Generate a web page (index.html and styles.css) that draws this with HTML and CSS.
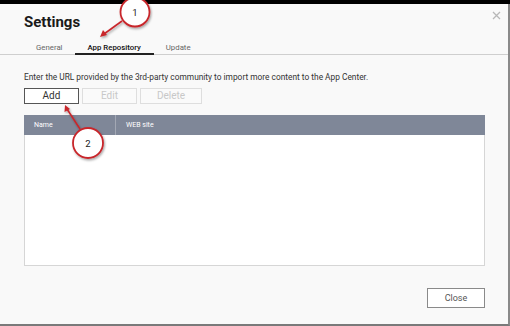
FILE: index.html
```html
<!DOCTYPE html>
<html>
<head>
<meta charset="utf-8">
<link rel="stylesheet" href="styles.css">
</head>
<body>
<div class="page">
  <div class="topbar"></div>
  <div class="dialog">
    <div class="close-x">
      <svg width="9" height="9" viewBox="0 0 9 9"><path d="M1 1L8 8M8 1L1 8" stroke="#b8b8b8" stroke-width="1.3" fill="none"/></svg>
    </div>
    <h1 class="title">Settings</h1>
    <div class="tabs">
      <div class="tab">General</div>
      <div class="tab active">App Repository</div>
      <div class="tab">Update</div>
    </div>
    <div class="content">
      <p class="desc">Enter the URL provided by the 3rd-party community to import more content to the App Center.</p>
      <div class="actions">
        <button class="btn btn-add">Add</button>
        <button class="btn btn-edit disabled">Edit</button>
        <button class="btn btn-del disabled">Delete</button>
      </div>
      <div class="table">
        <div class="thead">
          <div class="th th-name">Name</div>
          <div class="th th-web">WEB site</div>
        </div>
        <div class="tbody"></div>
      </div>
      <div class="footer">
        <button class="btn-close">Close</button>
      </div>
    </div>
  </div>
  <svg class="annot" width="510" height="326" viewBox="0 0 510 326">
    <defs>
      <filter id="sh" x="-40%" y="-40%" width="180%" height="180%">
        <feDropShadow dx="1" dy="1.5" stdDeviation="1.2" flood-color="#000" flood-opacity="0.35"/>
      </filter>
    </defs>
    <g filter="url(#sh)">
      <line x1="122" y1="21" x2="104" y2="34" stroke="#c8262c" stroke-width="1.6"/>
      <polygon points="100,37 103,30 107,35" fill="#c8262c"/>
      <circle cx="135" cy="12" r="14.5" fill="#fff" stroke="#c8262c" stroke-width="1.8"/>
      <line x1="80" y1="129" x2="67" y2="109" stroke="#c8262c" stroke-width="1.6"/>
      <polygon points="65,105 64.5,112 70,109" fill="#c8262c"/>
      <circle cx="88" cy="143" r="15" fill="#fff" stroke="#c8262c" stroke-width="1.8"/>
    </g>
    <text x="135" y="15.5" class="num">1</text>
    <text x="88" y="146.5" class="num">2</text>
  </svg>
</div>
</body>
</html>
```
FILE: styles.css
```css
* { box-sizing: border-box; }
html, body { margin: 0; padding: 0; }
body {
  width: 510px;
  height: 326px;
  overflow: hidden;
  font-family: Roboto, "Liberation Sans", sans-serif;
  background: #000;
}
.page {
  position: relative;
  width: 510px;
  height: 326px;
}
.topbar {
  height: 4px;
  background: #000;
}
.dialog {
  position: relative;
  height: 322px;
  background: #f9f9f9;
  border-right: 2px solid #8a8a8a;
  border-bottom: 2px solid #7a7a7a;
  padding-top: 9px;
}
.close-x {
  position: absolute;
  top: 7px;
  right: 7px;
  width: 9px;
  height: 9px;
  display: flex;
}
.title {
  margin: 0 0 0 24px;
  font-size: 15px;
  line-height: 18px;
  font-weight: 700;
  color: #1a1a1a;
}
.tabs {
  display: flex;
  margin-top: 12px;
  padding-left: 24px;
  border-bottom: 1px solid #cfcfcf;
}
.tab {
  font-size: 7.8px;
  line-height: 10px;
  color: #666;
  padding: 0 12px;
  margin-bottom: -1px;
  border-bottom: 2px solid transparent;
}
.tab.active {
  color: #111;
  font-weight: 500;
  padding: 0 13px;
  border-bottom-color: #222;
}
.content {
  padding: 0 23px 0 24px;
}
.desc {
  margin: 17px 0 0;
  font-size: 8.35px;
  line-height: 11px;
  color: #333;
}
.actions {
  display: flex;
  gap: 3px;
  margin-top: 5px;
}
.btn {
  height: 16px;
  padding: 0;
  background: #fff;
  font-family: inherit;
  font-size: 10px;
  line-height: 14px;
  color: #333;
  border: 1px solid #555;
}
.btn-add { width: 55px; }
.btn-edit { width: 55px; }
.btn-del { width: 62px; }
.btn.disabled {
  color: #c8c8c8;
  border-color: #dedede;
  background: #fafafa;
}
.table {
  margin-top: 11px;
  height: 151px;
  border: 1px solid #d6d6d6;
  border-top: none;
  background: #fff;
  display: flex;
  flex-direction: column;
}
.thead {
  display: flex;
  height: 20px;
  background: #7f8798;
  margin: 0 -1px;
}
.th {
  font-size: 7px;
  line-height: 20px;
  color: #fff;
  padding-left: 10px;
}
.th-name {
  width: 92px;
  border-right: 1px solid #a3a8b4;
}
.th-web { flex: 1; }
.tbody { flex: 1; }
.footer {
  display: flex;
  justify-content: flex-end;
  margin-top: 22px;
}
.btn-close {
  width: 58px;
  height: 20px;
  padding: 0;
  background: #fff;
  border: 1px solid #8a8a8a;
  font-family: inherit;
  font-size: 9px;
  color: #555;
}
.annot {
  position: absolute;
  top: 0;
  left: 0;
  pointer-events: none;
}
.num {
  font-family: Roboto, "Liberation Sans", sans-serif;
  font-size: 9.5px;
  text-anchor: middle;
  fill: #222;
}
```
